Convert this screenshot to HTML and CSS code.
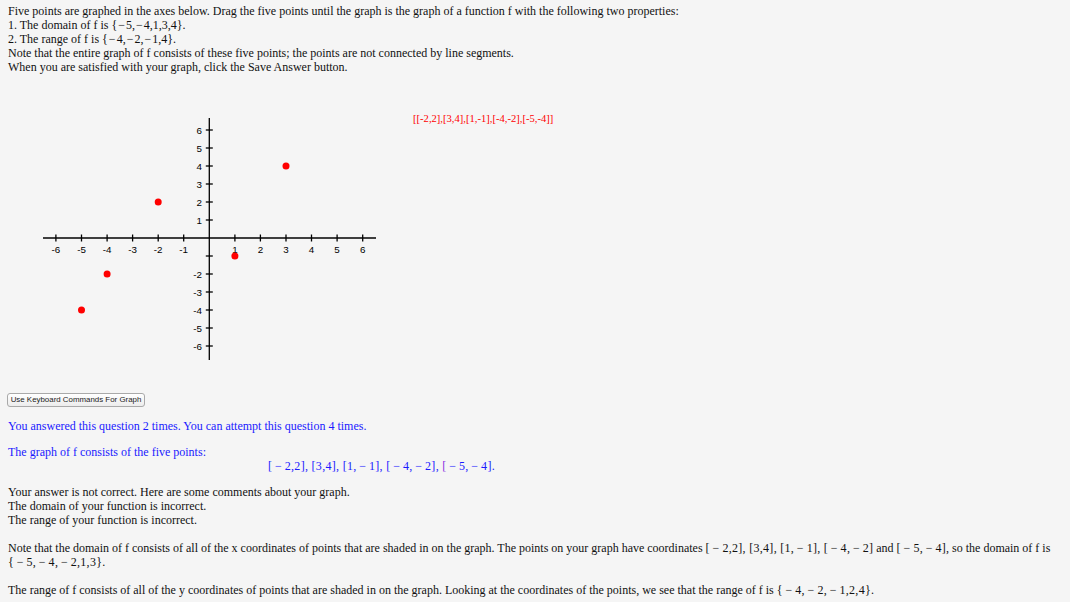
FILE: index.html
```html
<!DOCTYPE html>
<html>
<head>
<meta charset="utf-8">
<link rel="stylesheet" href="styles.css">
</head>
<body>
<div class="page">
  <div class="intro">
    <div class="line">Five points are graphed in the axes below. Drag the five points until the graph is the graph of a function f with the following two properties:</div>
    <div class="line">1. The domain of f is <span class="mi">{&#8202;&minus;&#8202;5,&#8202;&minus;&#8202;4,1,3,4}</span>.</div>
    <div class="line">2. The range of f is <span class="mi">{&#8202;&minus;&#8202;4,&#8202;&minus;&#8202;2,&#8202;&minus;&#8202;1,4}</span>.</div>
    <div class="line">Note that the entire graph of f consists of these five points; the points are not connected by line segments.</div>
    <div class="line">When you are satisfied with your graph, click the Save Answer button.</div>
  </div>

  <div class="graph-row">
    <svg class="graph" width="340" height="255" viewBox="40 110 340 255" xmlns="http://www.w3.org/2000/svg">
      <g stroke="#000" stroke-width="1.3" fill="none">
        <line x1="43" y1="238" x2="376" y2="238"/>
        <line x1="209.3" y1="118" x2="209.3" y2="360"/>
        <line x1="55.9" y1="234.5" x2="55.9" y2="241.5"/>
        <line x1="81.5" y1="234.5" x2="81.5" y2="241.5"/>
        <line x1="107.1" y1="234.5" x2="107.1" y2="241.5"/>
        <line x1="132.6" y1="234.5" x2="132.6" y2="241.5"/>
        <line x1="158.2" y1="234.5" x2="158.2" y2="241.5"/>
        <line x1="183.7" y1="234.5" x2="183.7" y2="241.5"/>
        <line x1="234.9" y1="234.5" x2="234.9" y2="241.5"/>
        <line x1="260.4" y1="234.5" x2="260.4" y2="241.5"/>
        <line x1="286" y1="234.5" x2="286" y2="241.5"/>
        <line x1="311.5" y1="234.5" x2="311.5" y2="241.5"/>
        <line x1="337.1" y1="234.5" x2="337.1" y2="241.5"/>
        <line x1="362.7" y1="234.5" x2="362.7" y2="241.5"/>
        <line x1="205.8" y1="130" x2="212.8" y2="130"/>
        <line x1="205.8" y1="148" x2="212.8" y2="148"/>
        <line x1="205.8" y1="166" x2="212.8" y2="166"/>
        <line x1="205.8" y1="184" x2="212.8" y2="184"/>
        <line x1="205.8" y1="202" x2="212.8" y2="202"/>
        <line x1="205.8" y1="220" x2="212.8" y2="220"/>
        <line x1="205.8" y1="256" x2="212.8" y2="256"/>
        <line x1="205.8" y1="274" x2="212.8" y2="274"/>
        <line x1="205.8" y1="292" x2="212.8" y2="292"/>
        <line x1="205.8" y1="310" x2="212.8" y2="310"/>
        <line x1="205.8" y1="328" x2="212.8" y2="328"/>
        <line x1="205.8" y1="346" x2="212.8" y2="346"/>
      </g>
      <g class="lbl" text-anchor="middle">
        <text x="55.9" y="253">-6</text>
        <text x="81.5" y="253">-5</text>
        <text x="107.1" y="253">-4</text>
        <text x="132.6" y="253">-3</text>
        <text x="158.2" y="253">-2</text>
        <text x="183.7" y="253">-1</text>
        <text x="234.9" y="253">1</text>
        <text x="260.4" y="253">2</text>
        <text x="286" y="253">3</text>
        <text x="311.5" y="253">4</text>
        <text x="337.1" y="253">5</text>
        <text x="362.7" y="253">6</text>
      </g>
      <g class="lbl" text-anchor="end">
        <text x="202" y="133.5">6</text>
        <text x="202" y="151.5">5</text>
        <text x="202" y="169.5">4</text>
        <text x="202" y="187.5">3</text>
        <text x="202" y="205.5">2</text>
        <text x="202" y="223.5">1</text>
        <text x="202" y="277.5">-2</text>
        <text x="202" y="295.5">-3</text>
        <text x="202" y="313.5">-4</text>
        <text x="202" y="331.5">-5</text>
        <text x="202" y="349.5">-6</text>
      </g>
      <g fill="#ff0000">
        <circle cx="158.2" cy="202" r="3.5"/>
        <circle cx="286" cy="166" r="3.5"/>
        <circle cx="234.9" cy="256" r="3.5"/>
        <circle cx="107.1" cy="274" r="3.5"/>
        <circle cx="81.5" cy="310" r="3.5"/>
      </g>
    </svg>
    <div class="coords">[[-2,2],[3,4],[1,-1],[-4,-2],[-5,-4]]</div>
  </div>

  <button class="kbd-btn" type="button">Use Keyboard Commands For Graph</button>

  <div class="blue line gap12">You answered this question 2 times. You can attempt this question 4 times.</div>
  <div class="blue line gap12">The graph of f consists of the five points:</div>
  <div class="blue line display"><span class="m">[&#8201;&minus;&#8201;2,2], [3,4], [1,&#8201;&minus;&#8201;1], [&#8201;&minus;&#8201;4,&#8201;&minus;&#8201;2], <span class="purple">[</span>&#8201;&minus;&#8201;5,&#8201;&minus;&#8201;4].</span></div>

  <div class="feedback gap12">
    <div class="line">Your answer is not correct. Here are some comments about your graph.</div>
    <div class="line">The domain of your function is incorrect.</div>
    <div class="line">The range of your function is incorrect.</div>
  </div>

  <div class="para gap14">
    <div class="line">Note that the domain of f consists of all of the x coordinates of points that are shaded in on the graph. The points on your graph have coordinates <span class="m">[&#8201;&minus;&#8201;2,2], [3,4], [1,&#8201;&minus;&#8201;1], [&#8201;&minus;&#8201;4,&#8201;&minus;&#8201;2]</span> and <span class="m">[&#8201;&minus;&#8201;5,&#8201;&minus;&#8201;4]</span>, so the domain of f is</div>
    <div class="line"><span class="m">{&#8201;&minus;&#8201;5,&#8201;&minus;&#8201;4,&#8201;&minus;&#8201;2,1,3}</span>.</div>
  </div>

  <div class="para gap14">
    <div class="line">The range of f consists of all of the y coordinates of points that are shaded in on the graph. Looking at the coordinates of the points, we see that the range of f is <span class="m">{&#8201;&minus;&#8201;4,&#8201;&minus;&#8201;2,&#8201;&minus;&#8201;1,2,4}</span>.</div>
  </div>
</div>
</body>
</html>
```

FILE: styles.css
```css
html, body {
  margin: 0;
  padding: 0;
  background: #f5f5f5;
}
.page {
  padding: 4px 8px 0 8px;
  font-family: "Liberation Serif", "Times New Roman", serif;
  font-size: 12px;
  line-height: 14px;
  color: #111;
}
.line {
  white-space: nowrap;
}
.m {
  letter-spacing: 0.3px;
}
.mi {
  letter-spacing: 0;
}
.graph-row {
  display: flex;
  align-items: flex-start;
  margin-top: 36px;
  margin-left: 32px;
}
.graph {
  display: block;
}
.lbl text {
  font-family: "Liberation Sans", Arial, sans-serif;
  font-size: 9.8px;
  fill: #000;
}
.coords {
  margin-left: 33px;
  margin-top: 2px;
  color: #ff0000;
  font-family: "Liberation Serif", "Times New Roman", serif;
  font-size: 10.6px;
  line-height: 14px;
}
.kbd-btn {
  display: block;
  margin: 28px 0 0 -1px;
  height: 14px;
  width: 138px;
  padding: 0;
  border: 1px solid #a9a9a9;
  border-radius: 3px;
  background: linear-gradient(#ffffff, #ececec);
  font-family: "Liberation Sans", Arial, sans-serif;
  font-size: 7.9px;
  line-height: 12px;
  white-space: nowrap;
  color: #222;
}
.gap12 { margin-top: 12px; }
.gap14 { margin-top: 14px; }
.blue { color: #1a1aff; }
.purple { color: #8a2be2; }
.display {
  padding-left: 260px;
}
```
